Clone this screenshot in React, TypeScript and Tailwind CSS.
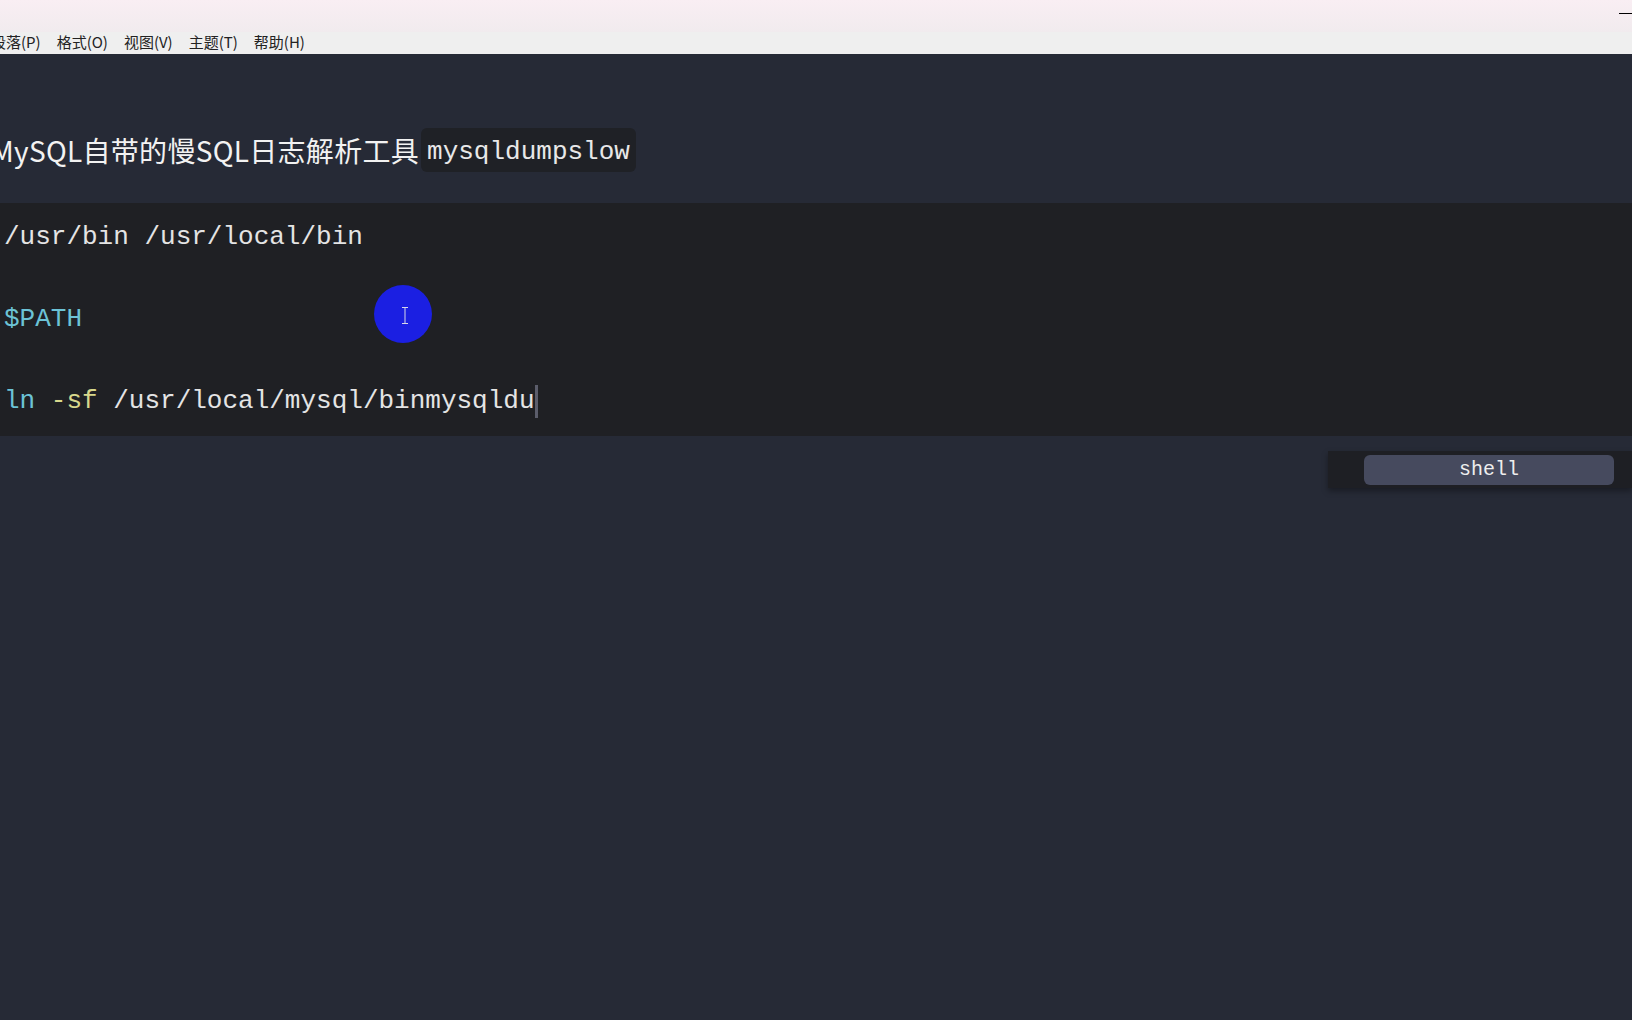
import React from "react";

const mono = { fontFamily: '"Liberation Mono", "DejaVu Sans Mono", monospace' };
const cjk = { fontFamily: '"Noto Sans CJK SC", "Noto Sans", sans-serif' };

export default function App() {
  return (
    <div className="w-[1632px] h-[1020px] overflow-hidden bg-[#262a36] flex flex-col relative">
      {/* title bar */}
      <div className="h-[32px] bg-gradient-to-b from-[#f9eef3] to-[#f1ebee] relative shrink-0">
        <div className="absolute right-0 top-[13px] w-[13px] h-[1px] bg-black" />
      </div>
      {/* menu bar */}
      <div
        className="h-[22px] bg-[#efefef] flex items-center pb-[1px] gap-[16px] text-[15px] text-[#222] ml-[-9px] shrink-0"
        style={cjk}
      >
        <span>段落(P)</span>
        <span>格式(O)</span>
        <span>视图(V)</span>
        <span>主题(T)</span>
        <span>帮助(H)</span>
      </div>

      {/* heading */}
      <div className="h-[149px] flex items-center pt-[43px] ml-[-9px] shrink-0">
        <span className="text-[28px] text-[#f2f2f2] leading-none tracking-[0.3px]" style={cjk}>
          MySQL自带的慢SQL日志解析工具
        </span>
        <span
          className="ml-[2px] h-[44px] px-[6px] pt-[5px] flex items-center rounded-md bg-[#1f2126] text-[26px] text-[#e8e8e8]"
          style={mono}
        >
          mysqldumpslow
        </span>
      </div>

      {/* code block */}
      <div
        className="h-[233px] bg-[#1f2024] flex flex-col pt-[16px] gap-[46px] pl-[4px] text-[26px] text-[#e4e4e4] shrink-0"
        style={mono}
      >
        <div className="h-[36px] flex items-center whitespace-pre">/usr/bin /usr/local/bin</div>
        <div className="h-[36px] flex items-center whitespace-pre text-[#6cc3d6]">$PATH</div>
        <div className="h-[36px] flex items-center whitespace-pre">
          <span className="text-[#6cc3d6]">ln</span>
          <span> </span>
          <span className="text-[#d8d88c]">-sf</span>
          <span> /usr/local/mysql/binmysqldu</span>
          <span className="inline-block w-[3px] h-[33px] bg-[#5b5d6b] ml-[0px]" />
        </div>
      </div>

      {/* language selector */}
      <div className="flex justify-end mt-[15px]">
        <div className="w-[304px] h-[37px] bg-[#1e1f24] shadow-[0_3px_6px_rgba(0,0,0,0.35)] flex items-center pl-[36px]">
          <div
            className="w-[250px] h-[30px] rounded-md bg-[#464a5e] flex items-center justify-center text-[20px] text-[#eeeeee]"
            style={mono}
          >
            shell
          </div>
        </div>
      </div>

      {/* cursor highlight */}
      <div className="absolute left-[374px] top-[285px] w-[58px] h-[58px] rounded-full bg-[#1b1fe2] flex items-center justify-center">
        <svg width="8" height="17" viewBox="0 0 8 17" className="ml-[4px] mt-[2px]">
          <path d="M1 0.5h6M1 16.5h6M4 0.5v16" stroke="#d8d8e8" strokeWidth="1" fill="none" />
        </svg>
      </div>
    </div>
  );
}
